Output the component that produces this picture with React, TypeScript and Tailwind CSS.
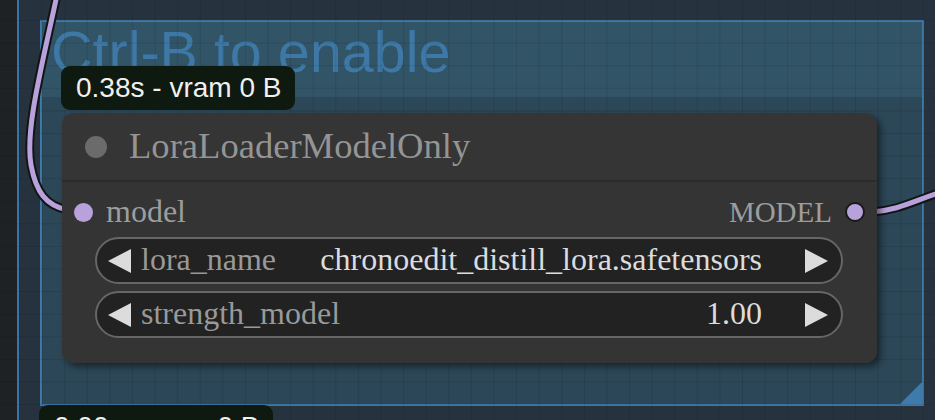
/**
 * Node canvas: a bypassed group holding a LoraLoaderModelOnly node,
 * with its timing badge and the wires running in and out.
 */

const serif = "font-['Liberation_Serif',serif]"
const sans = "font-['Liberation_Sans',Arial,sans-serif]"

function LeftArrow() {
  return (
    <svg width="24" height="24" viewBox="0 0 24 24" className="shrink-0">
      <polygon points="23,0 23,24 0,12" fill="#dcdcdc" />
    </svg>
  )
}

function RightArrow() {
  return (
    <svg width="24" height="24" viewBox="0 0 24 24" className="shrink-0">
      <polygon points="1,0 1,24 24,12" fill="#dcdcdc" />
    </svg>
  )
}

type ComboWidgetProps = {
  label: string
  value: string
}

function ComboWidget({ label, value }: ComboWidgetProps) {
  return (
    <div className="flex h-[47px] items-center rounded-full border-2 border-[#666666] bg-[#222222] pl-[11px] pr-[13px]">
      <LeftArrow />
      <span className={`${serif} ml-[9px] -translate-y-[2px] text-[32px] leading-none text-[#999999]`}>
        {label}
      </span>
      <span
        className={`${serif} ml-auto mr-[42px] -translate-y-[2px] text-[32px] leading-none text-[#dcdcdc]`}
      >
        {value}
      </span>
      <RightArrow />
    </div>
  )
}

function Wires() {
  return (
    <svg
      width="935"
      height="420"
      viewBox="0 0 935 420"
      className="pointer-events-none absolute inset-0"
    >
      <g fill="none" strokeLinecap="round">
        <path
          d="M 57 -5 C 41 70, 25 130, 31 165 C 36 192, 46 206, 68 210"
          stroke="#141414"
          strokeWidth="9"
        />
        <path
          d="M 57 -5 C 41 70, 25 130, 31 165 C 36 192, 46 206, 68 210"
          stroke="#b7a2dc"
          strokeWidth="5"
        />
        <path d="M 872 212 C 900 210, 915 200, 945 191" stroke="#141414" strokeWidth="9" />
        <path d="M 872 212 C 900 210, 915 200, 945 191" stroke="#b7a2dc" strokeWidth="5" />
      </g>
    </svg>
  )
}

function LoraNode() {
  return (
    <div className="absolute left-[62px] top-[113px] flex h-[250px] w-[815px] flex-col rounded-[12px] bg-[#353535] shadow-[4px_4px_6px_rgba(0,0,0,0.45)]">
      <div className="flex h-[67px] items-center pl-[23px]">
        <span className="h-[22px] w-[22px] rounded-full bg-[#6b6b6b]" />
        <span className={`${serif} ml-[22px] text-[36.6px] leading-none text-[#949494]`}>
          LoraLoaderModelOnly
        </span>
      </div>
      <div className="h-[2px] bg-[#2b2b2b]" />
      <div className="flex flex-1 flex-col rounded-b-[12px] bg-[#343434] pt-[6px]">
        <div className="flex h-[48px] items-center pl-[12px] pr-[12px]">
          <span className="h-[19px] w-[19px] rounded-full bg-[#b7a2dc]" />
          <span className={`${serif} ml-[13px] -translate-y-[1px] text-[32px] leading-none text-[#9d9d9d]`}>
            model
          </span>
          <span
            className={`${serif} ml-auto mr-[13px] text-[29px] leading-none text-[#9d9d9d]`}
          >
            MODEL
          </span>
          <span className="h-[20px] w-[20px] rounded-full border-2 border-[#1a1a1a] bg-[#b7a2dc]" />
        </div>
        <div className="flex flex-col gap-[7px] pl-[33px] pr-[34px] pt-[1px]">
          <ComboWidget label="lora_name" value="chronoedit_distill_lora.safetensors" />
          <ComboWidget label="strength_model" value="1.00" />
        </div>
      </div>
    </div>
  )
}

function Badge({ text, className }: { text: string; className: string }) {
  return (
    <div
      className={`absolute flex h-[44px] w-[234px] items-center rounded-[9px] bg-[#0e1a10] pl-[15px] ${className}`}
    >
      <span className={`${sans} text-[28px] leading-none text-[#f0f0f0]`}>{text}</span>
    </div>
  )
}

export default function App() {
  return (
    <div className="relative h-[420px] w-[935px] overflow-hidden bg-[#1e2224]">
      <div className="flex h-full">
        <div className="w-[17px] shrink-0" />
        <div className="flex-1 border-l-2 border-[#3a76a6] bg-[#26333f] pl-[21px] pt-[20px]">
          <div className="flex h-[386px] w-[884px] flex-col border-2 border-[#3e7aaa]">
            <div className="h-[75px] bg-[#325467] pl-[9px] pt-[2px]">
              <span className={`${sans} text-[57.5px] leading-none text-[#3d78a6]`}>
                Ctrl-B to enable
              </span>
            </div>
            <div className="flex flex-1 flex-col justify-end bg-[#2c4757]">
              <div className="flex justify-end">
                <svg width="22" height="22" viewBox="0 0 22 22">
                  <polygon points="22,0 22,22 0,22" fill="#3e7aaa" />
                </svg>
              </div>
            </div>
          </div>
        </div>
      </div>

      <div className="pointer-events-none absolute inset-0 bg-[linear-gradient(rgba(0,0,0,0.1)_1px,transparent_1px),linear-gradient(90deg,rgba(0,0,0,0.1)_1px,transparent_1px)] bg-[size:22.6px_22.6px] bg-[position:19px_20px]" />

      <Wires />
      <Badge text="0.38s - vram 0 B" className="left-[61px] top-[66px]" />
      <LoraNode />
      <Badge text="0.00s - vram 0 B" className="left-[39px] top-[405px]" />
    </div>
  )
}
